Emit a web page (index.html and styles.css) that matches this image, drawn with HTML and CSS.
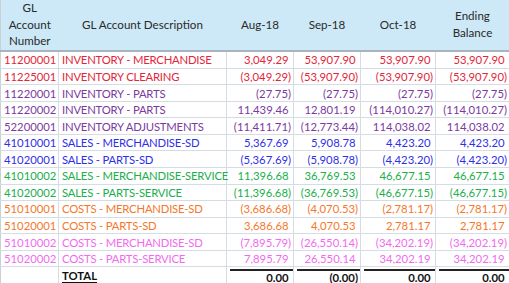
FILE: index.html
```html
<!DOCTYPE html>
<html>
<head>
<meta charset="utf-8">
<link rel="stylesheet" href="styles.css">
</head>
<body>
<table class="gl">
  <colgroup>
    <col class="c-num"><col class="c-desc"><col class="c-m1"><col class="c-m2"><col class="c-m3"><col class="c-end">
  </colgroup>
  <thead>
    <tr>
      <th>GL<br>Account<br>Number</th>
      <th>GL Account Description</th>
      <th>Aug-18</th>
      <th>Sep-18</th>
      <th>Oct-18</th>
      <th>Ending<br>Balance</th>
    </tr>
  </thead>
  <tbody>
    <tr class="red"><td>11200001</td><td class="d">INVENTORY - MERCHANDISE</td><td class="n p">3,049.29</td><td class="n p">53,907.90</td><td class="n p">53,907.90</td><td class="n p">53,907.90</td></tr>
    <tr class="red"><td>11225001</td><td class="d">INVENTORY CLEARING</td><td class="n">(3,049.29)</td><td class="n">(53,907.90)</td><td class="n">(53,907.90)</td><td class="n">(53,907.90)</td></tr>
    <tr class="purple"><td>11220001</td><td class="d">INVENTORY - PARTS</td><td class="n">(27.75)</td><td class="n">(27.75)</td><td class="n">(27.75)</td><td class="n">(27.75)</td></tr>
    <tr class="purple"><td>11220002</td><td class="d">INVENTORY - PARTS</td><td class="n p">11,439.46</td><td class="n p">12,801.19</td><td class="n">(114,010.27)</td><td class="n">(114,010.27)</td></tr>
    <tr class="purple"><td>52200001</td><td class="d">INVENTORY ADJUSTMENTS</td><td class="n">(11,411.71)</td><td class="n">(12,773.44)</td><td class="n p">114,038.02</td><td class="n p">114,038.02</td></tr>
    <tr class="blue"><td>41010001</td><td class="d">SALES - MERCHANDISE-SD</td><td class="n p">5,367.69</td><td class="n p">5,908.78</td><td class="n p">4,423.20</td><td class="n p">4,423.20</td></tr>
    <tr class="blue"><td>41020001</td><td class="d">SALES - PARTS-SD</td><td class="n">(5,367.69)</td><td class="n">(5,908.78)</td><td class="n">(4,423.20)</td><td class="n">(4,423.20)</td></tr>
    <tr class="green"><td>41010002</td><td class="d">SALES - MERCHANDISE-SERVICE</td><td class="n p">11,396.68</td><td class="n p">36,769.53</td><td class="n p">46,677.15</td><td class="n p">46,677.15</td></tr>
    <tr class="green"><td>41020002</td><td class="d">SALES - PARTS-SERVICE</td><td class="n">(11,396.68)</td><td class="n">(36,769.53)</td><td class="n">(46,677.15)</td><td class="n">(46,677.15)</td></tr>
    <tr class="orange"><td>51010001</td><td class="d">COSTS - MERCHANDISE-SD</td><td class="n">(3,686.68)</td><td class="n">(4,070.53)</td><td class="n">(2,781.17)</td><td class="n">(2,781.17)</td></tr>
    <tr class="orange"><td>51020001</td><td class="d">COSTS - PARTS-SD</td><td class="n p">3,686.68</td><td class="n p">4,070.53</td><td class="n p">2,781.17</td><td class="n p">2,781.17</td></tr>
    <tr class="pink"><td>51010002</td><td class="d">COSTS - MERCHANDISE-SD</td><td class="n">(7,895.79)</td><td class="n">(26,550.14)</td><td class="n">(34,202.19)</td><td class="n">(34,202.19)</td></tr>
    <tr class="pink"><td>51020002</td><td class="d">COSTS - PARTS-SERVICE</td><td class="n p">7,895.79</td><td class="n p">26,550.14</td><td class="n p">34,202.19</td><td class="n p">34,202.19</td></tr>
    <tr class="total"><td></td><td class="d"><span class="total-label">TOTAL</span></td><td class="n"><div class="sum p">0.00</div></td><td class="n"><div class="sum">(0.00)</div></td><td class="n"><div class="sum p">0.00</div></td><td class="n"><div class="sum p">0.00</div></td></tr>
  </tbody>
</table>
</body>
</html>
```

FILE: styles.css
```css
html, body {
  margin: 0;
  padding: 0;
  background: #ffffff;
  overflow: hidden;
}

.gl {
  border-collapse: collapse;
  table-layout: fixed;
  width: 509px;
  font-family: "Lato", "Open Sans", sans-serif;
  font-size: 11.3px;
  color: #222;
}

.c-num { width: 58px; }
.c-desc { width: 168px; }
.c-m1 { width: 67px; }
.c-m2 { width: 67px; }
.c-m3 { width: 75px; }
.c-end { width: 74px; }

.gl thead th {
  background: #cde8f6;
  font-weight: normal;
  font-size: 11.6px;
  text-align: center;
  vertical-align: middle;
  line-height: 16.7px;
  height: 50px;
  padding: 0;
  border-bottom: 2px solid #a9b4bf;
  color: #2a2a2a;
}

.gl thead th:first-child {
  border-left: 1px solid #c8d0d8;
}

.gl tbody td {
  height: 15.57px;
  padding: 0 2px 0 3px;
  line-height: 15px;
  white-space: nowrap;
  overflow: visible;
  border: 1px solid #d6dce4;
  border-top: none;
}

.gl tbody td:first-child {
  padding-left: 3px;
  border-left-color: #c8d0d8;
}

.gl tbody td.d {
  letter-spacing: -0.2px;
}

.gl tbody td.n {
  text-align: right;
}

.gl tbody td.p,
.gl .sum.p {
  padding-right: 4.5px;
}

.red td { color: #e2263a; }
.purple td { color: #7b3aa0; }
.blue td { color: #2f2fe6; }
.green td { color: #20ae4c; }
.orange td { color: #f4782c; }
.pink td { color: #f26af0; }

.total td {
  color: #111;
  font-weight: bold;
  border-bottom: none;
}

.total td.n {
  padding: 0 0 0 3px;
  vertical-align: top;
}

.sum {
  border-top: 2px solid #222;
  margin-top: 2px;
  padding-right: 2px;
  line-height: 13px;
}

.total-label {
  letter-spacing: 0;
  text-decoration: underline;
  text-decoration-thickness: 2px;
  text-underline-offset: 2px;
}
```
